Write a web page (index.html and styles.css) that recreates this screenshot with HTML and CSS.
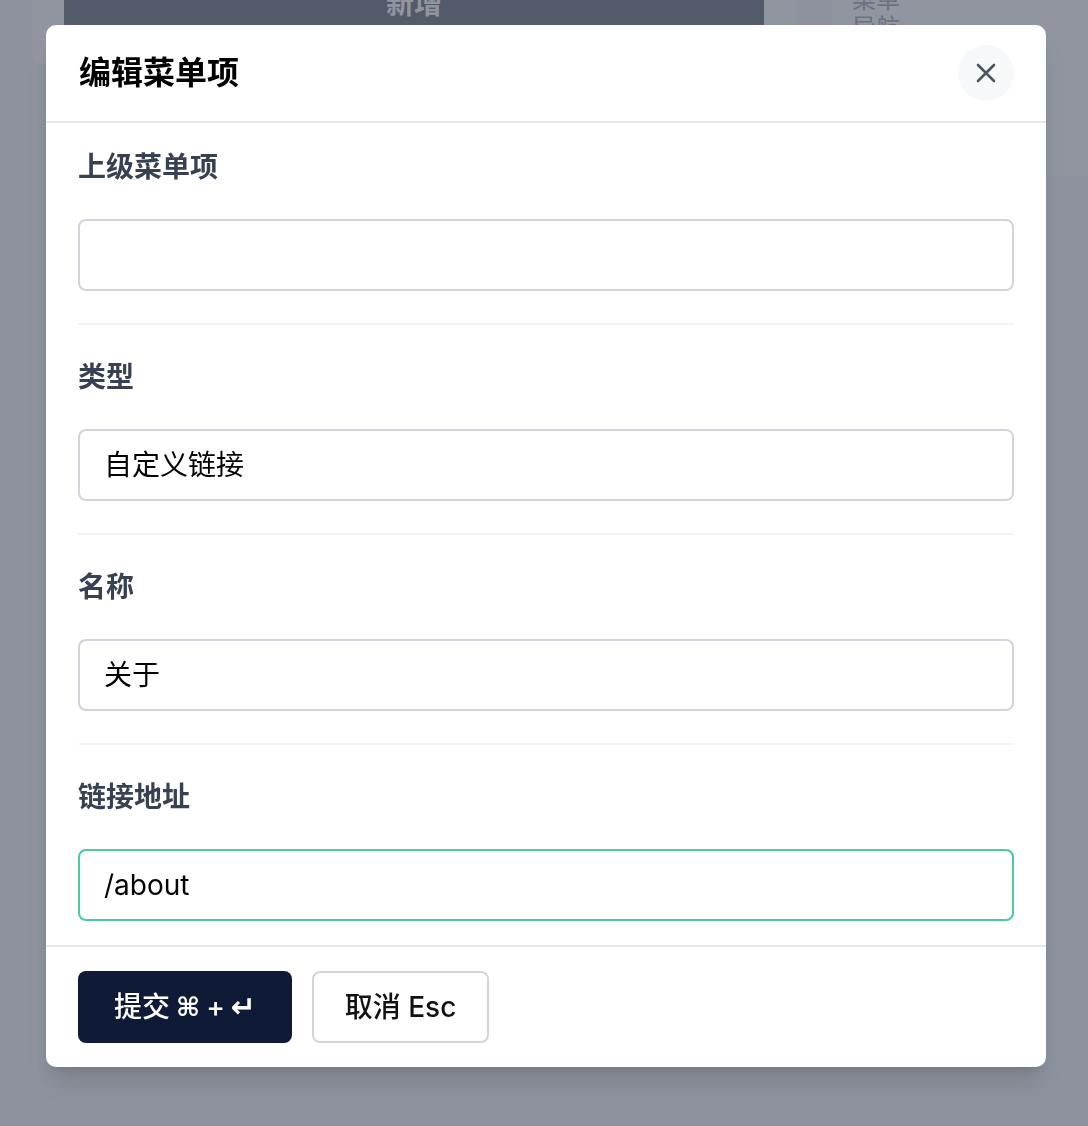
FILE: index.html
```html
<!DOCTYPE html>
<html lang="zh-CN">
<head>
<meta charset="utf-8">
<title>编辑菜单项</title>
<link rel="stylesheet" href="styles.css">
</head>
<body>
<div class="page">
  <div class="left-card">
    <button class="bg-btn" type="button">新增</button>
  </div>
  <div class="right-panel">
    <div class="rp-line">菜单</div>
    <div class="rp-line">导航</div>
  </div>
</div>

<div class="overlay">
  <div class="modal">
    <div class="modal-header">
      <h2 class="modal-title">编辑菜单项</h2>
      <button class="close-btn" type="button" aria-label="关闭">
        <svg width="20" height="20" viewBox="0 0 20 20" fill="none" stroke="#4b5563" stroke-width="2.6" stroke-linecap="round">
          <path d="M2 2 L18 18 M18 2 L2 18"/>
        </svg>
      </button>
    </div>
    <div class="modal-body">
      <div class="field">
        <label class="field-label">上级菜单项</label>
        <div class="input"></div>
      </div>
      <div class="field">
        <label class="field-label">类型</label>
        <div class="input">自定义链接</div>
      </div>
      <div class="field">
        <label class="field-label">名称</label>
        <div class="input">关于</div>
      </div>
      <div class="field">
        <label class="field-label">链接地址</label>
        <div class="input input-focus">/about</div>
      </div>
    </div>
    <div class="modal-footer">
      <button class="btn btn-primary" type="button">提交 <span class="sym">⌘</span> + <span class="sym sym-ret">↵</span></button>
      <button class="btn btn-secondary" type="button">取消 Esc</button>
    </div>
  </div>
</div>
</body>
</html>
```
FILE: styles.css
```css
* { box-sizing: border-box; }

html, body {
  margin: 0;
  padding: 0;
}

body {
  width: 1088px;
  height: 1126px;
  overflow: hidden;
  background: #f3f4f6;
  font-family: Inter, "Noto Sans CJK SC", "DejaVu Sans", sans-serif;
  color: #111827;
}

/* underlying page */
.page {
  display: flex;
  align-items: flex-start;
  gap: 36px;
  padding-left: 32px;
  margin-top: -24px;
}

.left-card {
  width: 764px;
  background: #ffffff;
  border-radius: 0 0 10px 10px;
  padding: 0 32px 32px;
}

.bg-btn {
  display: block;
  width: 700px;
  height: 56px;
  border: none;
  border-radius: 8px;
  background: #0f172a;
  color: #ffffff;
  font: 600 28px/40px Inter, "Noto Sans CJK SC", sans-serif;
}

.right-panel {
  flex: 1;
  height: 200px;
  background: #ffffff;
  padding: 10px 20px;
}

.rp-line {
  font-size: 24px;
  line-height: 28px;
  color: #6b7280;
}

/* overlay + modal */
.overlay {
  position: fixed;
  inset: 0;
  background: rgba(107, 114, 128, 0.75);
  display: flex;
  align-items: flex-start;
  padding: 25px 0 0 46px;
}

.modal {
  width: 1000px;
  background: #ffffff;
  border-radius: 10px;
  box-shadow: 0 20px 25px -5px rgba(0, 0, 0, 0.12), 0 8px 10px -6px rgba(0, 0, 0, 0.1);
  overflow: hidden;
}

.modal-header {
  height: 98px;
  display: flex;
  align-items: center;
  justify-content: space-between;
  padding: 0 32px 0 33px;
  border-bottom: 2px solid #e5e7eb;
}

.modal-title {
  margin: 0;
  font-size: 32px;
  line-height: 48px;
  font-weight: 700;
  color: #000000;
}

.close-btn {
  width: 56px;
  height: 56px;
  border-radius: 50%;
  border: none;
  background: #f7f8fa;
  display: flex;
  align-items: center;
  justify-content: center;
  padding: 0;
}

.modal-body {
  padding: 24px 32px;
}

.field {
  display: flex;
  flex-direction: column;
  gap: 32px;
  padding: 32px 0;
  border-bottom: 2px solid #f3f4f6;
}

.field:first-child { padding-top: 0; }
.field:last-child { padding-bottom: 0; border-bottom: none; }

.field-label {
  font-size: 28px;
  line-height: 40px;
  font-weight: 600;
  color: #374151;
}

.input {
  height: 72px;
  border: 2px solid #d1d5db;
  border-radius: 8px;
  padding: 14px 24px;
  font-size: 28px;
  line-height: 40px;
  color: #000000;
}

.input-focus {
  border-color: #4ccb9c;
}

.modal-footer {
  display: flex;
  gap: 20px;
  padding: 24px 32px;
  border-top: 2px solid #e5e7eb;
}

.btn {
  height: 72px;
  border-radius: 8px;
  padding: 0;
  white-space: nowrap;
  display: flex;
  align-items: center;
  justify-content: center;
  gap: 0;
  font-family: Inter, "Noto Sans CJK SC", "DejaVu Sans", sans-serif;
  font-size: 28px;
  line-height: 40px;
  font-weight: 500;
}

.btn-primary {
  background: #0f1a36;
  color: #ffffff;
  border: none;
  width: 214px;
  word-spacing: 2px;
}

.btn-secondary {
  background: #ffffff;
  color: #111111;
  border: 2px solid #d1d5db;
  width: 177px;
}

.sym {
  font-family: "DejaVu Sans", sans-serif;
  font-size: 26px;
  font-weight: 700;
  margin: 0 6px;
}

.sym-ret {
  font-size: 30px;
  margin-right: 0;
}
```
